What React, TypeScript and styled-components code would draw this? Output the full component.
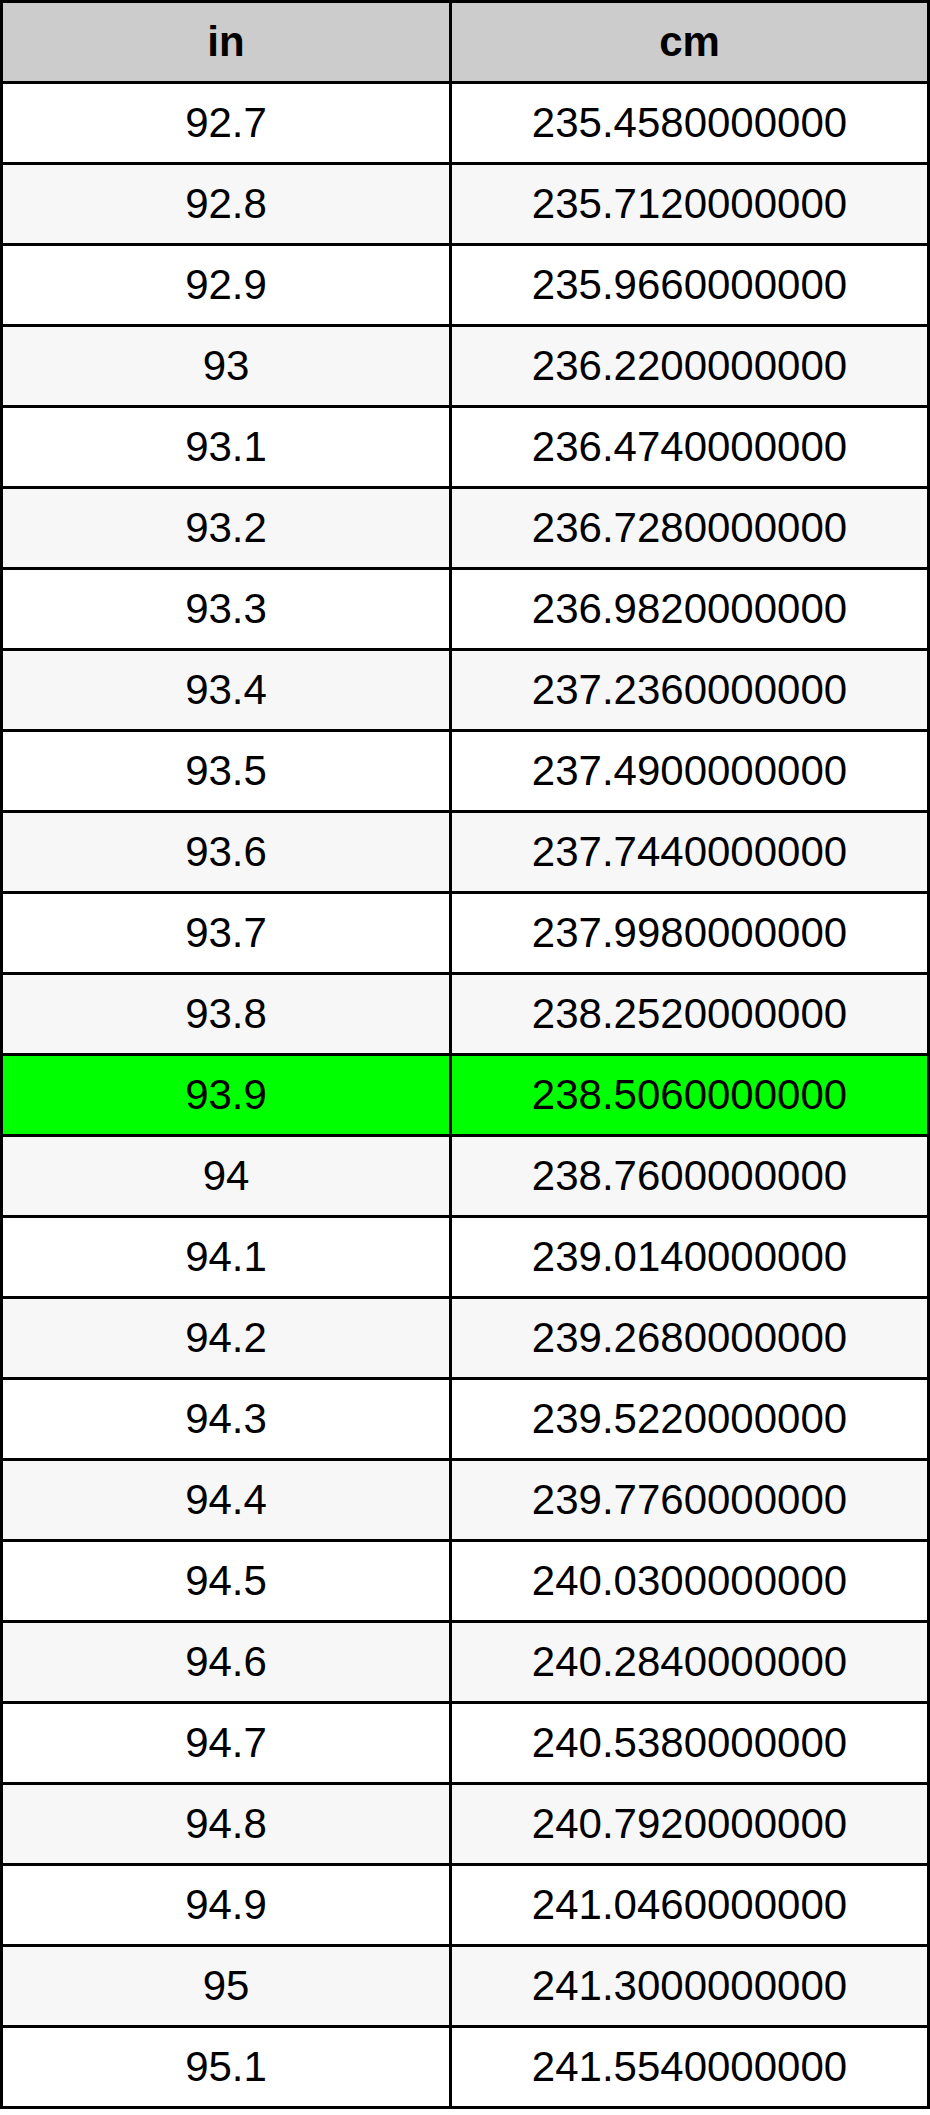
import React from "react";
import styled, { createGlobalStyle } from "styled-components";

const GlobalStyle = createGlobalStyle`
  html, body {
    margin: 0;
    padding: 0;
    background: #ffffff;
  }
  body {
    font-family: "Liberation Sans", Arial, Helvetica, sans-serif;
  }
`;

const START = 927;
const COUNT = 25;
const HIGHLIGHT = 939;

const rows = Array.from({ length: COUNT }, (_, i) => {
  const tenths = START + i;
  const inches = tenths % 10 === 0 ? String(tenths / 10) : (tenths / 10).toFixed(1);
  const cm = ((tenths * 254) / 1000).toFixed(10);
  return { tenths, inches, cm };
});

export default function App() {
  return (
    <>
      <GlobalStyle />
      <Table>
        <HeadCell>in</HeadCell>
        <HeadCell>cm</HeadCell>
        {rows.map((row, i) => {
          const tone = row.tenths === HIGHLIGHT ? "hit" : i % 2 === 0 ? "plain" : "stripe";
          return (
            <React.Fragment key={row.tenths}>
              <Cell $tone={tone}>{row.inches}</Cell>
              <Cell $tone={tone}>{row.cm}</Cell>
            </React.Fragment>
          );
        })}
      </Table>
    </>
  );
}

const Table = styled.div`
  display: grid;
  grid-template-columns: 446px 475px;
  grid-auto-rows: 78px;
  gap: 3px;
  width: 930px;
  box-sizing: border-box;
  border: 3px solid #000;
  background: #000;
`;

const toneColors: Record<string, string> = {
  plain: "#ffffff",
  stripe: "#f7f7f7",
  hit: "#00ff00",
};

const Cell = styled.div<{ $tone: string }>`
  display: flex;
  align-items: center;
  justify-content: center;
  background: ${(p) => toneColors[p.$tone]};
  color: #000;
  font-size: 42px;
`;

const HeadCell = styled(Cell).attrs({ $tone: "plain" })`
  background: #cccccc;
  font-weight: bold;
`;
